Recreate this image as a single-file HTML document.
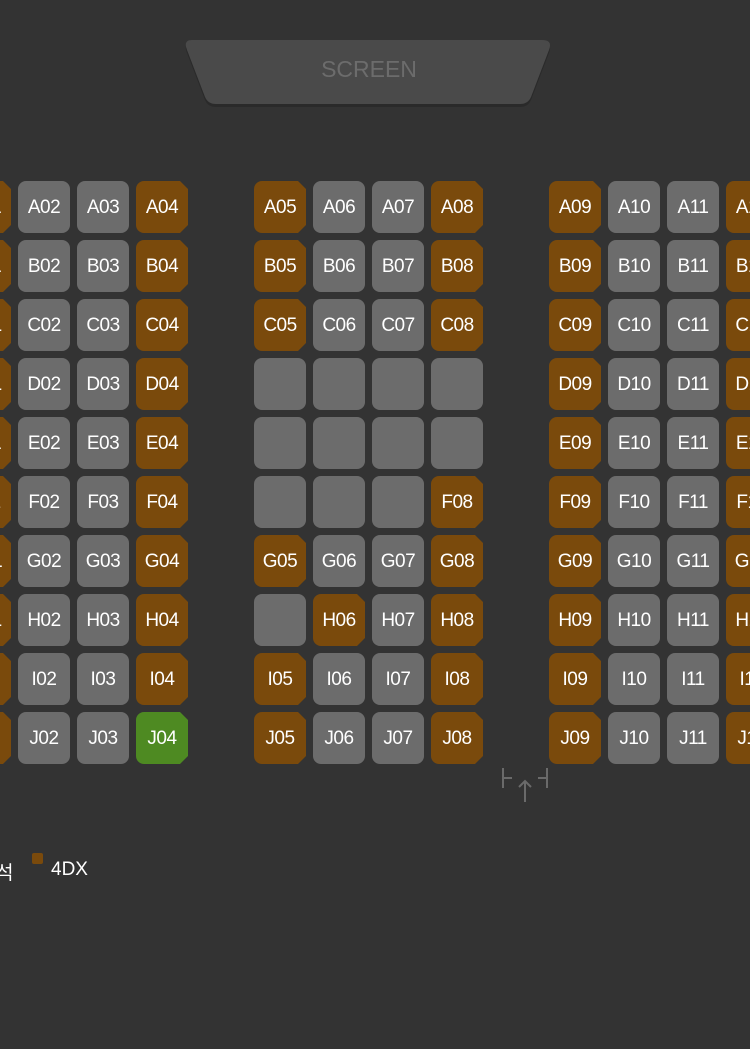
<!DOCTYPE html>
<html><head><meta charset="utf-8"><style>
html,body{margin:0;padding:0;width:750px;height:1049px;overflow:hidden;background:#333333;position:relative;font-family:"Liberation Sans","Noto Sans CJK KR",sans-serif}
.s{position:absolute;width:52px;height:52px;color:#fff;font-size:19px;line-height:54px;text-align:center;letter-spacing:-0.5px}
.g{background:#6c6c6c;border-radius:8px}
.b{background:#7a4a0c;border-radius:8px 0 0 8px;clip-path:polygon(0 0,44px 0,52px 8px,52px 44px,44px 52px,0 52px)}
.v{background:#4e8a22;border-radius:8px 0 0 8px;clip-path:polygon(0 0,44px 0,52px 8px,52px 44px,44px 52px,0 52px)}
</style></head><body>
<svg style="position:absolute;left:0;top:0" width="750" height="200">
<path d="M192 40 L542 40 Q553 40 549 50 L531 97 Q528 104 520 104 L216 104 Q208 104 205 97 L187 50 Q183 40 192 40Z" fill="#242424" transform="translate(0,3)" opacity="0.6"/>
<path d="M192 40 L542 40 Q553 40 549 50 L531 97 Q528 104 520 104 L216 104 Q208 104 205 97 L187 50 Q183 40 192 40Z" fill="#4a4a4a"/>
<text x="369" y="77" text-anchor="middle" font-family="Liberation Sans, sans-serif" font-size="23" fill="#6c6c6c">SCREEN</text>
</svg>
<div id="seats"></div>
<svg style="position:absolute;left:0;top:0" width="750" height="1049">
<g stroke="#6a6a6a" stroke-width="2" fill="none">
<path d="M503 768V788M503 778H512M547 768V788M538 778H547M525 781V802M519 787L525 781L531 787"/>
</g></svg>
<div style="position:absolute;left:-4px;top:858px;color:#fff;font-size:19px">석</div>
<div style="position:absolute;left:32px;top:853px;width:11px;height:11px;background:#7a4a0c;border-radius:2px"></div>
<div style="position:absolute;left:51px;top:859px;color:#fff;font-size:19px">4DX</div>
<script>
var xs={1:-41,2:18,3:77,4:136,5:254,6:313,7:372,8:431,9:549,10:608,11:667,12:726};
var rows="ABCDEFGHIJ";var h="";
var mid={A:"bggb",B:"bggb",C:"bggb",D:"eeee",E:"eeee",F:"eeeb",G:"bggb",H:"ebgb",I:"bggb",J:"bggb"};
for(var r=0;r<10;r++){var R=rows[r];var y=181+r*59;
for(var c=1;c<=12;c++){var t;
if(c>=5&&c<=8){t=mid[R][c-5];}else if(c==1||c==4||c==9||c==12){t="b";}else t="g";
if(R=="J"&&c==4)t="v";
var lab=R+(c<10?"0":"")+c;
if(t=="e")h+='<div class="s g" style="left:'+xs[c]+'px;top:'+y+'px"></div>';
else h+='<div class="s '+t+'" style="left:'+xs[c]+'px;top:'+y+'px">'+lab+'</div>';}}
document.getElementById("seats").innerHTML=h;
</script>
</body></html>
